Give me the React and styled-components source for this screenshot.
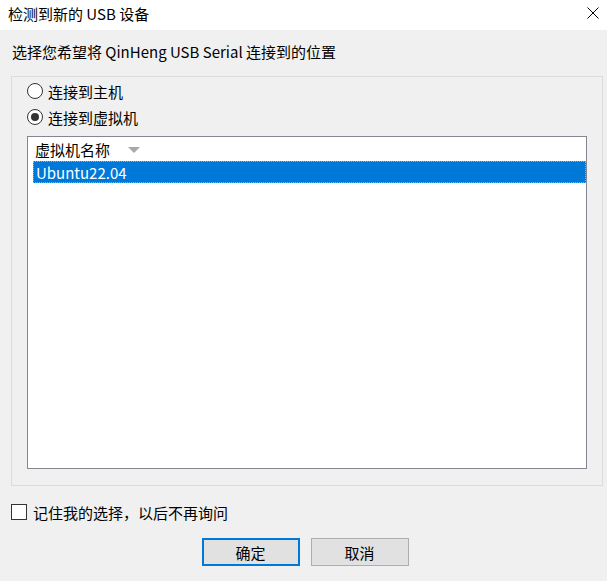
import React from 'react';
import styled, { createGlobalStyle } from 'styled-components';

const GlobalStyle = createGlobalStyle`
    html, body {
        margin:0;
        padding:0;
        background:#f0f0f0;
    }
    body {
        font-family:"Noto Sans CJK SC", "Noto Sans", sans-serif;
        color:#000;
    }
`;

const Window = styled.div`
    width:607px;
    height:581px;
    display:flex;
    flex-direction:column;
    background:#f0f0f0;
    overflow:hidden;
`;

const TitleBar = styled.div`
    height:30px;
    background:#fff;
    display:flex;
    align-items:center;
    justify-content:space-between;
    padding:0 8px 2px 8px;
    box-sizing:border-box;
`;

const Title = styled.span`
    font-size:15px;
    line-height:20px;
`;

const CloseBtn = styled.span`
    display:flex;
    align-items:center;
    margin-bottom:3px;
`;

const Body = styled.div`
    flex:1;
    display:flex;
    flex-direction:column;
    padding:11px 4px 0 11px;
`;

const Prompt = styled.div`
    font-size:15px;
    line-height:22px;
    padding-left:1px;
`;

const GroupBox = styled.div`
    margin-top:13px;
    height:410px;
    border:1px solid #dcdcdc;
    box-sizing:border-box;
    padding:1px 15px 16px 15px;
    display:flex;
    flex-direction:column;
`;

const OptionRow = styled.label`
    display:flex;
    align-items:center;
    height:26px;
    font-size:15px;
    gap:5px;
`;

const Radio = styled.span`
    width:16px;
    height:16px;
    border:1px solid #333;
    border-radius:50%;
    background:#fff;
    box-sizing:border-box;
    display:flex;
    align-items:center;
    justify-content:center;

    &::after{
        content:"";
        width:8px;
        height:8px;
        border-radius:50%;
        background:${p => (p.$checked ? '#333' : 'transparent')};
    }
`;

const ListBox = styled.div`
    margin-top:6px;
    flex:1;
    width:560px;
    border:1px solid #828790;
    background:#fff;
    box-sizing:border-box;
    display:flex;
    flex-direction:column;
`;

const ListHeader = styled.div`
    height:24px;
    display:flex;
    align-items:center;
    padding-left:7px;
    font-size:15px;
    gap:18px;
`;

const SortArrow = styled.span`
    width:0;
    height:0;
    border-left:6px solid transparent;
    border-right:6px solid transparent;
    border-top:6px solid #a8a8a8;
    margin-top:1px;
`;

const ListRow = styled.div`
    margin-left:5px;
    height:22px;
    display:flex;
    align-items:center;
    padding-left:2px;
    font-size:15px;
    box-sizing:border-box;
    background:${p => (p.$selected ? '#0078d7' : 'transparent')};
    color:${p => (p.$selected ? '#fff' : '#000')};
    border:1px dotted ${p => (p.$selected ? '#f0a030' : 'transparent')};
`;

const CheckRow = styled.label`
    margin-top:15px;
    display:flex;
    align-items:center;
    font-size:15px;
    gap:6px;
    height:22px;
`;

const CheckBox = styled.span`
    width:16px;
    height:16px;
    border:1px solid #333;
    background:#fff;
    box-sizing:border-box;
`;

const ButtonRow = styled.div`
    margin-top:15px;
    display:flex;
    justify-content:center;
    gap:11px;
    padding-right:4px;
`;

const Button = styled.button`
    width:98px;
    height:28px;
    font-family:inherit;
    font-size:15px;
    background:#e1e1e1;
    box-sizing:border-box;
    border:${p => (p.$primary ? '2px solid #0078d7' : '1px solid #adadad')};
    padding:0;
    color:#000;
`;

function CloseIcon() {
    return (
        <svg width="12" height="12" viewBox="0 0 12 12">
            <path d="M0.5 0.5 L11.5 11.5 M11.5 0.5 L0.5 11.5" stroke="#000" strokeWidth="1" fill="none" />
        </svg>
    );
}

export default function App() {
    return (
        <Window>
            <GlobalStyle />
            <TitleBar>
                <Title>检测到新的 USB 设备</Title>
                <CloseBtn><CloseIcon /></CloseBtn>
            </TitleBar>
            <Body>
                <Prompt>选择您希望将 QinHeng USB Serial 连接到的位置</Prompt>
                <GroupBox>
                    <OptionRow><Radio />连接到主机</OptionRow>
                    <OptionRow><Radio $checked />连接到虚拟机</OptionRow>
                    <ListBox>
                        <ListHeader>虚拟机名称<SortArrow /></ListHeader>
                        <ListRow $selected>Ubuntu22.04</ListRow>
                    </ListBox>
                </GroupBox>
                <CheckRow><CheckBox />记住我的选择，以后不再询问</CheckRow>
                <ButtonRow>
                    <Button $primary>确定</Button>
                    <Button>取消</Button>
                </ButtonRow>
            </Body>
        </Window>
    );
}
